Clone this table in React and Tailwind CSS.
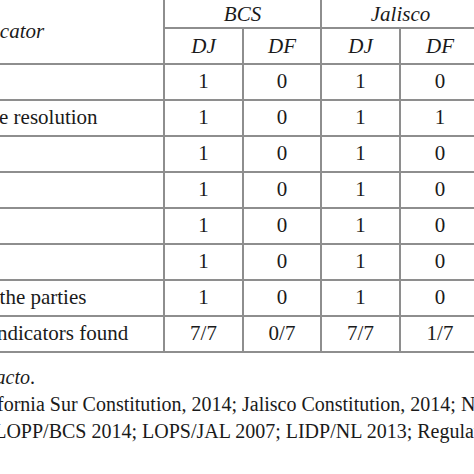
import React from 'react';

const rows = [
    { label: 'Court', v: ['1', '0', '1', '0'] },
    { label: 'Dispute resolution', v: ['1', '0', '1', '1'] },
    { label: 'Judge', v: ['1', '0', '1', '0'] },
    { label: 'Trial', v: ['1', '0', '1', '0'] },
    { label: 'Fees', v: ['1', '0', '1', '0'] },
    { label: 'Bond', v: ['1', '0', '1', '0'] },
    { label: 'Heard the parties', v: ['1', '0', '1', '0'] },
    { label: 'Total indicators found', v: ['7/7', '0/7', '7/7', '1/7'] },
];

const line = 'border-[#8e8e8e]';

export default function App() {
    return (
        <div className="w-[474px] h-[474px] overflow-hidden bg-white text-[#1a1a1a] [font-family:'Liberation_Serif','Times_New_Roman',serif]">
            <div className={`ml-[-65px] grid grid-cols-[230px_79px_78px_79px_78px] grid-rows-[29px_36px_repeat(8,36px)] text-[21px] ${line}`}>
                <div className={`row-span-2 border-r-2 border-b-2 ${line} flex items-center pl-[31px] italic`}>
                    Indicator
                </div>
                <div className={`col-span-2 border-r-2 border-b-2 ${line} flex items-center justify-center pt-[3px] italic`}>
                    BCS
                </div>
                <div className={`col-span-2 border-b-2 ${line} flex items-center justify-center pt-[3px] italic`}>
                    Jalisco
                </div>
                {['DJ', 'DF', 'DJ', 'DF'].map((h, i) => (
                    <div
                        key={i}
                        className={`border-b-2 ${i < 3 ? 'border-r-2' : ''} ${line} flex items-center justify-center pt-[2px] italic`}
                    >
                        {h}
                    </div>
                ))}
                {rows.map((r, ri) => (
                    <React.Fragment key={ri}>
                        <div className={`border-r-2 border-b-2 ${line} flex items-center pl-[8px] whitespace-nowrap`}>
                            {r.label}
                        </div>
                        {r.v.map((v, i) => (
                            <div
                                key={i}
                                className={`border-b-2 ${i < 3 ? 'border-r-2' : ''} ${line} flex items-center justify-center`}
                            >
                                {v}
                            </div>
                        ))}
                    </React.Fragment>
                ))}
            </div>

            <div className="mt-[11px] text-[20px] leading-[27px] whitespace-nowrap">
                <div className="w-[35px] flex justify-end">
                    <span>
                        Note: DJ = <i>de jure</i>; DF = <i>de facto</i>.
                    </span>
                </div>
                <div className="flex">
                    <div className="w-[242px] shrink-0 flex justify-end">
                        <span>Source: own elaboration based on Baja California Sur Constitution, 2014;{'\u00a0'}</span>
                    </div>
                    <span>Jalisco Constitution, 2014; Nuevo León Constitution, 2014;</span>
                </div>
                <div className="flex">
                    <div className="w-[142px] shrink-0 flex justify-end">
                        <span>LOPJ/BCS 2014; LOPP/BCS 2014;{'\u00a0'}</span>
                    </div>
                    <span>LOPS/JAL 2007; LIDP/NL 2013; Regulations</span>
                </div>
            </div>
        </div>
    );
}
